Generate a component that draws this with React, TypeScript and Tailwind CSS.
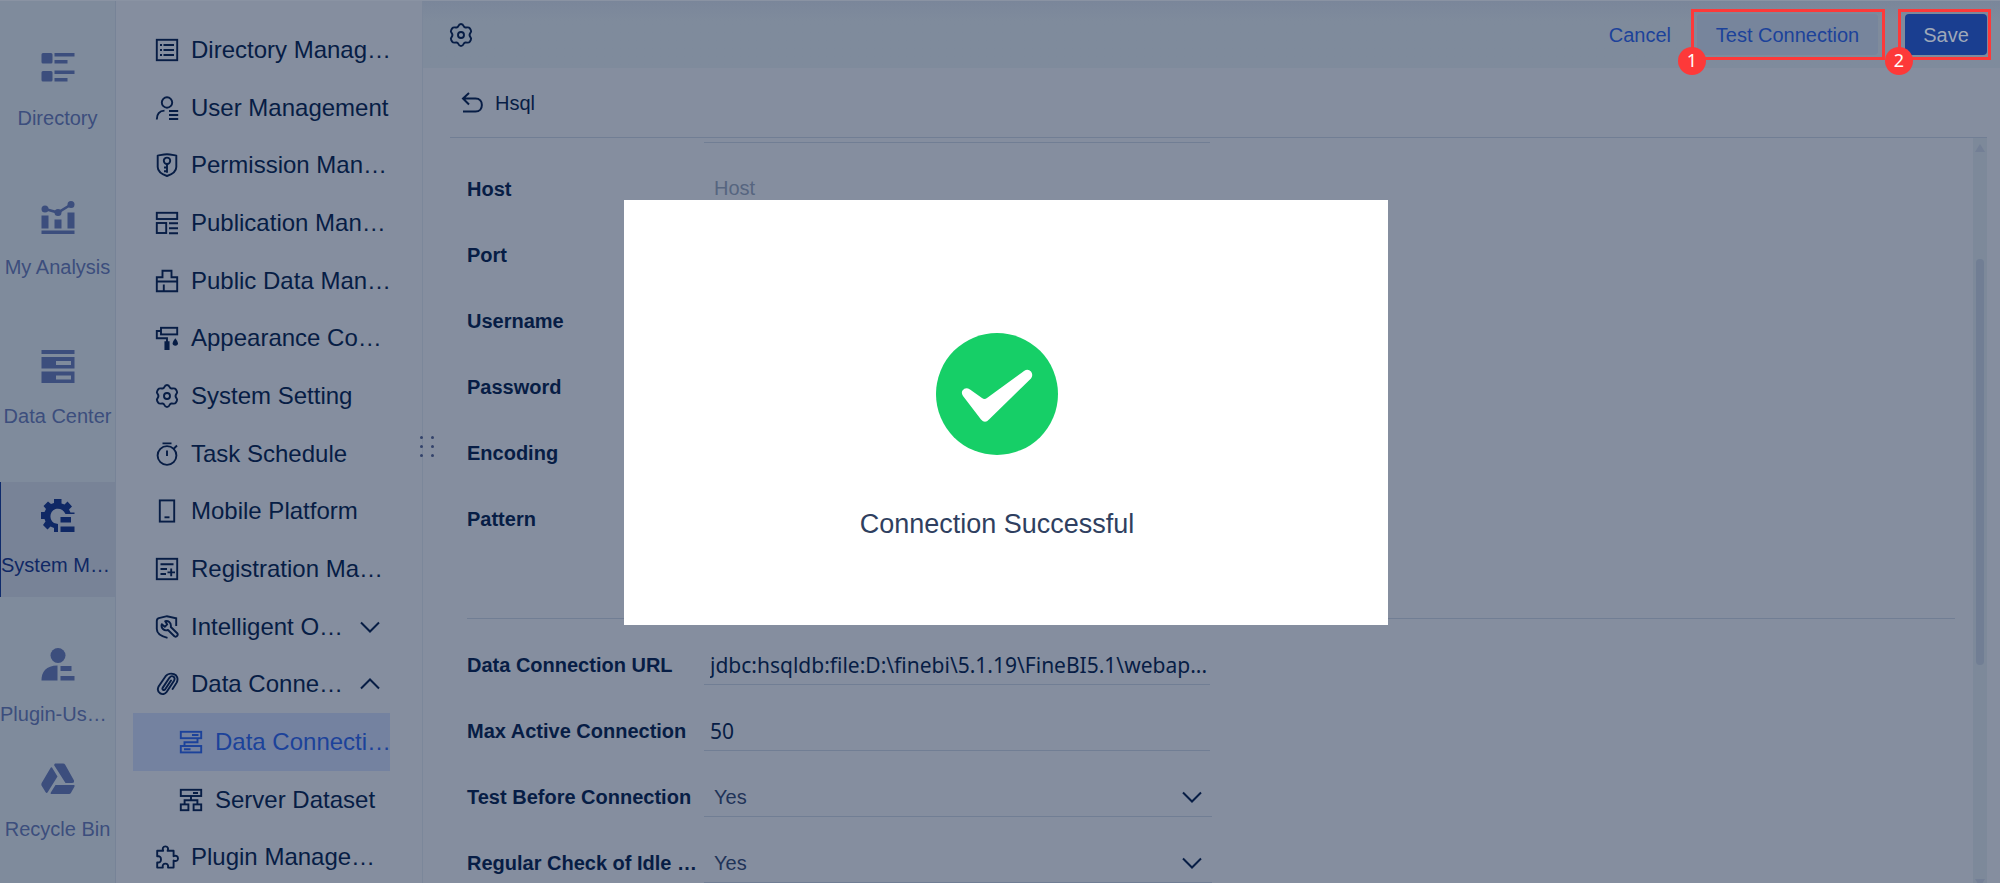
import type { ReactNode } from "react";

type IconProps = { children: ReactNode };

function LineIcon({ children }: IconProps) {
  return (
    <svg viewBox="0 0 24 24" fill="none" stroke="currentColor" strokeWidth="1.9" className="size-6 shrink-0" aria-hidden="true">
      {children}
    </svg>
  );
}

function SolidIcon({ children }: IconProps) {
  return (
    <svg viewBox="0 0 34 34" fill="currentColor" className="size-[34px] shrink-0" aria-hidden="true">
      {children}
    </svg>
  );
}

const icons = {
  list: (
    <>
      <rect x="1.8" y="1.8" width="20.4" height="20.4" />
      <path d="M8.5 7H19M8.5 12H19M8.5 17H19M5 7H7M5 12H7M5 17H7" />
    </>
  ),
  user: (
    <>
      <circle cx="12" cy="6.5" r="5.2" />
      <path d="M1.8 23.5C1.8 17.5 5 14.8 9.5 14.6M14 15H23.2M14 19H23.2M14 23H23.2" />
    </>
  ),
  shield: (
    <>
      <path strokeLinejoin="round" d="M12 1.2C15 1.2 18 2 21.3 2.6V14C21.3 18.5 17 21.3 12 23C7 21.3 2.7 18.5 2.7 14V2.6C6 2 9 1.2 12 1.2Z" />
      <circle cx="12" cy="7.8" r="3.2" />
      <path d="M12 10.8V19.8M12 14.5H9M12 18.3H9" />
    </>
  ),
  layout: (
    <>
      <rect x="1.8" y="1.8" width="20.4" height="6.2" />
      <rect x="1.8" y="12" width="9.4" height="10" />
      <path d="M14 12.2H23M14 17.2H23M14 22.2H23" />
    </>
  ),
  toolbox: (
    <>
      <path d="M1.8 22.2V8.2H7.5V1.8H16.5V8.2H22.2V22.2ZM1.8 12.5H22.2" />
      <path d="M8.8 22V15.5" />
    </>
  ),
  paint: (
    <>
      <rect x="6" y="1.8" width="16.2" height="6.6" />
      <path d="M6 5H1.8V12.3H12V16" />
      <path fill="currentColor" d="M10.4 16.2H13.6V23H10.4ZM20.3 13.8C22.5 16.5 22.8 18.8 20.3 18.8C17.8 18.8 18 16.5 20.3 13.8Z" />
    </>
  ),
  gear: (
    <>
      <path
        strokeLinejoin="round"
        d="M12 1C13.6 1 14.2 1.8 14.7 3.2C15.1 4.2 15.9 4.7 17 4.5C18.6 4.2 20 4 20.8 5.2L21.9 7.2C22.6 8.4 22.2 9 21.3 10C20.4 11.2 20.4 12.8 21.3 14C22.2 15 22.6 15.6 21.9 16.8L20.8 18.8C20 20 18.6 19.8 17 19.5C15.9 19.3 15.1 19.8 14.7 20.8C14.2 22.2 13.6 23 12 23C10.4 23 9.8 22.2 9.3 20.8C8.9 19.8 8.1 19.3 7 19.5C5.4 19.8 4 20 3.2 18.8L2.1 16.8C1.4 15.6 1.8 15 2.7 14C3.6 12.8 3.6 11.2 2.7 10C1.8 9 1.4 8.4 2.1 7.2L3.2 5.2C4 4 5.4 4.2 7 4.5C8.1 4.7 8.9 4.2 9.3 3.2C9.8 1.8 10.4 1 12 1Z"
      />
      <circle cx="12" cy="12" r="3" />
    </>
  ),
  timer: (
    <>
      <circle cx="12" cy="13.5" r="9.4" />
      <path d="M7.5 1.4H16.5M12 8.5V14M18.5 7L22 3.5" />
    </>
  ),
  phone: (
    <>
      <rect x="4.8" y="1.4" width="14.4" height="21.2" />
      <path d="M9.5 18.3H14.5" />
    </>
  ),
  register: (
    <>
      <rect x="1.8" y="1.8" width="20.4" height="20.4" />
      <path d="M5.5 7.2H18.5M5.5 12H12M5.5 17H11M12.5 15.4H20M16.2 11.5V19.3" />
    </>
  ),
  ops: (
    <>
      <path d="M21.2 11V3.2L12 1.2L3.8 3.2C2.4 3.6 1.8 4.6 1.8 6V14C1.8 18 5 21 12.5 22.8" />
      <path strokeLinejoin="round" d="M10.2 6.2C12.8 5.2 16.6 7.6 15.8 12L22.2 18.2C23.6 20 21.6 22.6 19.4 21.2L13 15C9 16.4 5.6 13 6.8 9.2L9.8 11.8L12.2 9.4Z" />
    </>
  ),
  clip: (
    <path
      strokeLinecap="round"
      d="M16 8.5L10.2 17.2C9 19 6.6 17.6 7.8 15.6L14.4 5.8C17 2.4 21 5 19 8.8L11.6 20C8.4 24.6 0.6 21 3.6 14.4L10.6 4.2C14.4 -0.6 25.4 1.6 21.8 10.4L17.6 17"
    />
  ),
  connection: (
    <>
      <rect x="1.8" y="1.8" width="20.4" height="6.4" />
      <rect x="1.8" y="16" width="20.4" height="6.4" />
      <path d="M13 5H19.5M5 19.2H11.5M18.5 8.2V12.2H5.5V16" />
    </>
  ),
  dataset: (
    <>
      <rect x="1.8" y="1.8" width="20.4" height="6.2" />
      <rect x="1.8" y="16.4" width="7.6" height="5.8" />
      <rect x="14.6" y="16.4" width="7.6" height="5.8" />
      <path d="M14 5H19M12 8V12.2M5.6 16.4V12.2H18.4V16.4" />
    </>
  ),
  plugin: (
    <path
      strokeLinejoin="round"
      d="M2.2 5.8H8.2C7 3.2 8.2 1.4 10.4 1.4C12.6 1.4 13.8 3.2 12.6 5.8H18.6V11.2C21.2 10 23 11.4 23 13.4C23 15.4 21.2 16.8 18.6 15.6V22.6H13C13.6 19.6 12.2 18.6 10.4 18.6C8.6 18.6 7.2 19.6 7.8 22.6H2.2V17.4C5 18 6 16.4 6 14.4C6 12.4 5 10.800 2.200 11.400Z"
    />
  ),
};

const railItems = [
  {
    label: "Directory",
    icon: (
      <path d="M2 1H10Q11.5 1 11.5 2.5V10Q11.5 11.5 10 11.5H2Q.5 11.5 .5 10V2.5Q.5 1 2 1ZM2 19H10Q11.5 19 11.5 20.5V28Q11.5 29.5 10 29.5H2Q.5 29.5 .5 28V20.5Q.5 19 2 19ZM13.5 1H33.5V4.5H13.5ZM13.5 8H26.5V11.5H13.5ZM13.5 18.5H33.5V22H13.5ZM13.5 26H26.5V29.5H13.5Z" />
    ),
  },
  {
    label: "My Analysis",
    icon: (
      <>
        <path d="M.5 14.5H7.500V27.500H.5ZM13.500 18.500H20.500V27.500H13.500ZM26.500 11.500H33.500V27.500H26.500ZM.5 29.500H33.500V33H.5Z" />
        <path d="M4 8L17 11.5L30 3.5" fill="none" stroke="currentColor" strokeWidth="2.6" />
        <circle cx="4" cy="8" r="3.5" />
        <circle cx="17" cy="11.5" r="3.5" />
        <circle cx="30" cy="3.5" r="3.5" />
      </>
    ),
  },
  {
    label: "Data Center",
    icon: <path fillRule="evenodd" d="M.5 0H33.5V4H.5ZM.5 7H33.5V18.5H.5ZM15 11V15H30V11ZM.5 21.5H33.5V33H.5ZM15 25.5V29.5H30V25.5Z" />,
  },
  {
    label: "System M…",
    active: true,
    clipped: true,
    icon: (
      <path d="M13 0H20.5V4.5L23.5 5.5L26.5 2.5L31 7.5L28 10.5L29.5 13.5H33.5V15H24.5C22.5 10.5 18.5 9 14.5 10C8 12.5 8 21 13 24L17 25V33H13V29L9.5 27.5L6.5 30.5L2 26L4.5 22.5L3.5 20H0V13H3.5L5 10L2.5 7L7 2.5L10 5L13 4ZM19.5 18H30V23.5H19.5ZM19.5 27.5H33.5V33H19.5Z" />
    ),
  },
  {
    label: "Plugin-Us…",
    clipped: true,
    icon: (
      <>
        <circle cx="17" cy="7.5" r="7.5" />
        <path d="M.5 32.5C.5 24 5 17.5 16.5 17.5V32.5ZM19.5 18H30.5V23H19.5ZM19.5 28H33.5V32.5H19.5Z" />
      </>
    ),
  },
  {
    label: "Recycle Bin",
    icon: (
      <path d="M14 .5H22Q23.5 .5 24.2 1.8L33 17.5Q33.5 20 31 20H24.5L13 2ZM11 4.5L16.5 13.5L6.5 29.5Q5.5 30.5 4.5 29L.5 22.5Q0 21 .8 19.8L9.5 5Q10 4 11 4.5ZM14.5 22H33Q34 22 33.5 23.5L30 29.8Q29.3 31 28 31H10.5Q9 31 9.8 29.5Z" />
    ),
  },
];

const menuItems = [
  { label: "Directory Manag…", icon: icons.list },
  { label: "User Management", icon: icons.user },
  { label: "Permission Man…", icon: icons.shield },
  { label: "Publication Man…", icon: icons.layout },
  { label: "Public Data Man…", icon: icons.toolbox },
  { label: "Appearance Co…", icon: icons.paint },
  { label: "System Setting", icon: icons.gear },
  { label: "Task Schedule", icon: icons.timer },
  { label: "Mobile Platform", icon: icons.phone },
  { label: "Registration Ma…", icon: icons.register },
  { label: "Intelligent O…", icon: icons.ops, expand: "down" },
  { label: "Data Conne…", icon: icons.clip, expand: "up" },
  { label: "Data Connecti…", icon: icons.connection, nested: true, active: true },
  { label: "Server Dataset", icon: icons.dataset, nested: true },
  { label: "Plugin Manage…", icon: icons.plugin },
];

const credentials = [
  { id: "host", label: "Host", placeholder: "Host" },
  { id: "port", label: "Port" },
  { id: "username", label: "Username" },
  { id: "password", label: "Password" },
  { id: "encoding", label: "Encoding" },
  { id: "pattern", label: "Pattern" },
];

const settings = [
  { id: "url", label: "Data Connection URL", value: "jdbc:hsqldb:file:D:\\finebi\\5.1.19\\FineBI5.1\\webap..." },
  { id: "max", label: "Max Active Connection", value: "50" },
  { id: "test", label: "Test Before Connection", value: "Yes", select: true },
  { id: "idle", label: "Regular Check of Idle …", value: "Yes", select: true },
];

function Chevron({ up }: { up?: boolean }) {
  return (
    <svg viewBox="0 0 20 12" fill="none" stroke="currentColor" strokeWidth="2" className="h-3 w-5 shrink-0" aria-hidden="true">
      <path d={up ? "M1 10.5L10 1.5L19 10.5" : "M1 1.5L10 10.5L19 1.5"} />
    </svg>
  );
}

function Rail() {
  return (
    <nav className="flex w-[116px] shrink-0 flex-col gap-[34px] border-r border-[#778397] bg-[#7f8b9c] pt-[34px] text-[#3c4e7d]">
      {railItems.map((item) => (
        <a
          key={item.label}
          href="#"
          className={`flex h-[115px] shrink-0 flex-col items-center pt-[17px] last:-mt-[34px] ${
            item.active ? "border-l border-[#0f2b6c] bg-[#788397] text-[#0f2865]" : ""
          }`}
        >
          <SolidIcon>{item.icon}</SolidIcon>
          <span className={`mt-[18px] text-xl leading-7 whitespace-nowrap ${item.clipped ? "self-start" : ""}`}>{item.label}</span>
        </a>
      ))}
    </nav>
  );
}

function Menu() {
  return (
    <aside className="-mb-[3px] flex w-[307px] shrink-0 flex-col border-r border-[#7b879a] pt-5 pr-8 pl-[17px]">
      {menuItems.map((item) => (
        <a
          key={item.label}
          href="#"
          className={`flex min-h-12 flex-1 items-center gap-3 text-2xl whitespace-nowrap ${item.nested ? "pl-[46px]" : "pl-[22px]"} ${
            item.active ? "bg-[#7482a0] text-[#1c429a]" : ""
          }`}
        >
          <LineIcon>{item.icon}</LineIcon>
          <span>{item.label}</span>
          {item.expand && (
            <span className="mr-2.5 ml-auto">
              <Chevron up={item.expand === "up"} />
            </span>
          )}
        </a>
      ))}
    </aside>
  );
}

type FieldProps = { id: string; label: string; placeholder?: string; value?: string; select?: boolean };

function Field({ id, label, placeholder, value, select }: FieldProps) {
  return (
    <div className="flex h-[66px] shrink-0 items-end">
      <label htmlFor={id} className="flex h-10 w-[237px] items-center text-xl font-bold whitespace-nowrap">
        {label}
      </label>
      {select ? (
        <div className="grid h-10 w-[508px] items-center border-b border-[#717e94]">
          <select id={id} defaultValue={value} className="col-start-1 row-start-1 appearance-none bg-transparent pl-2.5 text-xl text-[#1f3358] outline-none">
            <option>Yes</option>
            <option>No</option>
          </select>
          <span className="pointer-events-none col-start-1 row-start-1 mr-2.5 justify-self-end">
            <Chevron />
          </span>
        </div>
      ) : (
        <input
          id={id}
          defaultValue={value}
          placeholder={placeholder}
          className={`h-10 w-[506px] border-b border-[#717e94] bg-transparent outline-none placeholder:text-[#56657f] ${
            value ? "pl-1.5 font-['Noto_Sans','Open_Sans',sans-serif] text-[21px]" : "pl-2.5 text-xl"
          }`}
        />
      )}
    </div>
  );
}

function StepBadge({ step }: { step: number }) {
  return (
    <span className="absolute -bottom-[18px] -left-4 size-7 rounded-full bg-[#fd3939] text-center font-['Noto_Sans',sans-serif] text-lg leading-[26px] text-white">
      {step}
    </span>
  );
}

function Toolbar() {
  return (
    <header className="flex h-[67px] shrink-0 items-center bg-gradient-to-b from-[#7a869a] via-[#7f8b9c] via-30% to-[#7f8b9c] pr-[9px] pl-[26px]">
      <button type="button" aria-label="Settings">
        <LineIcon>{icons.gear}</LineIcon>
      </button>
      <div className="ml-auto flex items-center text-xl text-[#1c429a]">
        <button type="button" className="mr-5">
          Cancel
        </button>
        <div className="relative mr-[13px] border-[3px] border-[#fd3939] py-0.5 pr-1 pl-[3px]">
          <button type="button" className="h-[41px] w-[181px] rounded-sm bg-[#77859c]">
            Test Connection
          </button>
          <StepBadge step={1} />
        </div>
        <div className="relative border-[3px] border-[#fd3939] py-0.5 pr-px pl-1">
          <button type="button" className="h-[41px] w-[82px] rounded-sm bg-[#1a3e90] text-[#9fa8b8]">
            Save
          </button>
          <StepBadge step={2} />
        </div>
      </div>
    </header>
  );
}

function Scrollbar() {
  return (
    <div className="flex w-3.5 shrink-0 flex-col items-center bg-[#7d899a] pt-1.5 text-[#737f95]" aria-hidden="true">
      <svg viewBox="0 0 10 8" fill="currentColor" className="h-2 w-2.5">
        <path d="M5 0L10 8H0Z" />
      </svg>
      <div className="mt-[107px] h-[406px] w-2 rounded-full bg-[#717e94]" />
      <svg viewBox="0 0 10 8" fill="currentColor" className="mt-auto -mb-1 h-2 w-2.5 shrink-0">
        <path d="M0 0H10L5 8Z" />
      </svg>
    </div>
  );
}

function SuccessDialog() {
  return (
    <div className="pointer-events-none fixed inset-0">
      <div
        role="dialog"
        aria-labelledby="result"
        className="absolute top-[200px] left-[624px] flex h-[425px] w-[764px] flex-col items-center bg-white pt-[133px] pr-[18px]"
      >
        <svg viewBox="0 0 122 122" className="size-[122px]" aria-hidden="true">
          <circle cx="61" cy="61" r="61" fill="#16cf67" />
          <path
            fill="#fff"
            d="M34 56.5Q29.5 53.5 26.5 57.5Q25 60 27 63L45 86.500Q49 91 53 86.500L95 45.500Q97.500 42 95 38.500Q92 35.500 88 38L51 65Q48.500 67 46 65Z"
          />
        </svg>
        <p id="result" className="mt-[49px] text-[27px] leading-10 text-[#2f3f60]">
          Connection Successful
        </p>
      </div>
    </div>
  );
}

export default function App() {
  return (
    <div className="flex h-screen min-h-[800px] overflow-hidden border-t border-[#8a93a3] bg-[#858e9f] font-['Liberation_Sans',Arial,sans-serif] text-[#071d45]">
      <Rail />
      <Menu />
      <main className="relative flex min-w-0 flex-1 flex-col">
        <Toolbar />
        <div className="mr-[13px] ml-[27px] flex h-[70px] shrink-0 items-center gap-3 border-b border-[#717e94] pl-[11px] text-xl">
          <button type="button" aria-label="Back">
            <svg viewBox="0 0 22 22" fill="none" stroke="currentColor" strokeWidth="2" className="size-[22px]">
              <path d="M8 1L2 6.5L8 12.5M2 6.5H14.5C23 6.5 23 19.5 14.5 19.5H2" />
            </svg>
          </button>
          <h1>Hsql</h1>
        </div>
        <div className="mr-[13px] flex min-h-0 flex-1">
          <form className="flex min-w-0 flex-1 flex-col overflow-hidden pr-[18px] pl-11">
            <div className="ml-[237px] h-[5px] w-[506px] shrink-0 border-b border-[#717e94]" />
            {credentials.map((field) => (
              <Field key={field.id} {...field} />
            ))}
            <hr className="mt-[79px] shrink-0 border-[#717e94]" />
            {settings.map((field) => (
              <Field key={field.id} {...field} />
            ))}
          </form>
          <Scrollbar />
        </div>
        {/* drag handle of the side menu */}
        <div className="absolute top-[435px] -left-[3px] grid grid-cols-2 gap-x-2 gap-y-1.5" aria-hidden="true">
          {[0, 1, 2, 3, 4, 5].map((dot) => (
            <span key={dot} className="size-[3px] rounded-full bg-[#33436b]" />
          ))}
        </div>
      </main>
      <SuccessDialog />
    </div>
  );
}
